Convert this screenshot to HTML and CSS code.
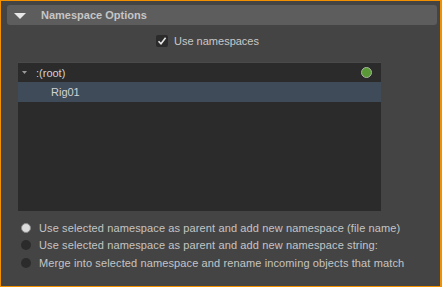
FILE: index.html
```html
<!DOCTYPE html>
<html>
<head>
<meta charset="utf-8">
<link rel="stylesheet" href="styles.css">
</head>
<body>
<div class="frame">
  <div class="header">
    <svg class="hdr-arrow" width="12" height="6" viewBox="0 0 12 6"><polygon points="0,0 12,0 6,6" fill="#e8e8e8"/></svg>
    <span class="hdr-title">Namespace Options</span>
  </div>
  <div class="check-row">
    <span class="checkbox">
      <svg width="12" height="12" viewBox="0 0 12 12"><path d="M2.5 6.2 L5 8.8 L9.6 2.8" fill="none" stroke="#e6e6e6" stroke-width="1.6"/></svg>
    </span>
    <span class="check-label">Use namespaces</span>
  </div>
  <div class="tree">
    <div class="row root">
      <svg class="tw" width="5" height="3" viewBox="0 0 5 3"><polygon points="0,0 5,0 2.5,3" fill="#9a9a9a"/></svg>
      <span class="row-text">:(root)</span>
      <span class="dot"></span>
    </div>
    <div class="row sel">
      <span class="row-text child">Rig01</span>
    </div>
  </div>
  <div class="radios">
    <div class="radio-row"><span class="radio on"></span><span>Use selected namespace as parent and add new namespace (file name)</span></div>
    <div class="radio-row"><span class="radio"></span><span>Use selected namespace as parent and add new namespace string:</span></div>
    <div class="radio-row"><span class="radio"></span><span>Merge into selected namespace and rename incoming objects that match</span></div>
  </div>
</div>
</body>
</html>
```
FILE: styles.css
```css
html, body {
  margin: 0;
  padding: 0;
  background: #444444;
}
.frame {
  width: 442px;
  height: 287px;
  box-sizing: border-box;
  border: 1px solid #f39000;
  border-right-width: 2px;
  background: #444444;
  padding: 4px 3px 0 6px;
  font-family: "Liberation Sans", Arial, sans-serif;
  font-size: 11px;
  color: #c4c4c4;
}
.header {
  height: 20px;
  border-radius: 3px;
  background: #5d5d5d;
  display: flex;
  align-items: center;
}
.hdr-arrow {
  margin-left: 7px;
  margin-top: 1px;
}
.hdr-title {
  margin-left: 15px;
  font-weight: bold;
  color: #c6c6c6;
  font-size: 11px;
}
.check-row {
  display: flex;
  align-items: center;
  margin-top: 10px;
  margin-left: 149px;
  height: 12px;
}
.checkbox {
  width: 12px;
  height: 12px;
  border-radius: 2px;
  background: #2b2b2b;
  display: flex;
}
.check-label {
  margin-left: 6px;
  color: #c8c8c8;
}
.tree {
  margin-top: 15px;
  margin-left: 11px;
  width: 363px;
  height: 149px;
  background: #2b2b2b;
  border-top: 1px solid #4a4a4a;
  box-sizing: border-box;
}
.row {
  height: 20px;
  display: flex;
  align-items: center;
}
.root {
  height: 19px;
}
.tw {
  margin-left: 4px;
  margin-right: 9px;
  margin-top: -1px;
}
.row-text {
  color: #d2d2d2;
}
.child {
  margin-left: 33px;
}
.sel {
  background: #404b59;
}
.dot {
  margin-left: auto;
  margin-right: 9px;
  width: 9px;
  height: 9px;
  border-radius: 50%;
  background: #5a9a36;
  border: 1px solid #a9b5a2;
}
.radios {
  margin-top: 11px;
  margin-left: 14px;
  display: flex;
  flex-direction: column;
  gap: 6.5px;
  letter-spacing: 0.12px;
}
.radio-row {
  display: flex;
  align-items: center;
  height: 11px;
  color: #c4c4c4;
}
.radio {
  width: 10px;
  height: 10px;
  border-radius: 50%;
  background: #2b2b2b;
  margin-right: 8px;
  box-sizing: border-box;
}
.radio.on {
  background: #dcdcdc;
  border: 1px solid #8a8a8a;
}
```
